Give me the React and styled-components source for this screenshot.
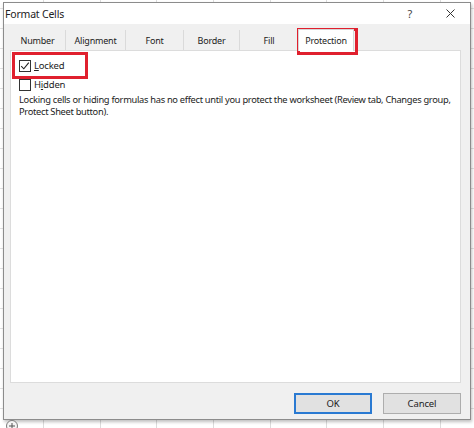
import React from 'react';
import styled, { createGlobalStyle } from 'styled-components';

const GlobalStyle = createGlobalStyle`
  html, body {
    margin: 0;
    padding: 0;
  }
  body {
    font-family: "Noto Sans", "Open Sans", sans-serif;
    color: #1a1a1a;
  }
`;

const tabs = [
  { label: 'Number', width: 55 },
  { label: 'Alignment', width: 60 },
  { label: 'Font', width: 58 },
  { label: 'Border', width: 56 },
  { label: 'Fill', width: 59 },
  { label: 'Protection', width: 56, active: true },
];

const Sheet = styled.div`
  position: relative;
  width: 474px;
  height: 428px;
  overflow: hidden;
  box-sizing: border-box;
  padding: 2px 0 0 3px;
  background-color: #ffffff;
  background-image:
    repeating-linear-gradient(90deg, transparent 0 43px, #dcdcdc 43px 44px, transparent 44px 56.7px),
    repeating-linear-gradient(0deg, transparent 0 19px, #e2e2e2 19px 20px);
`;

const Dialog = styled.div`
  position: relative;
  width: 468px;
  height: 418px;
  box-sizing: border-box;
  border: 1px solid #8c8c8c;
  background: #f0f0f0;
  box-shadow: 1px 2px 3px rgba(0, 0, 0, 0.25);
  display: flex;
  flex-direction: column;
`;

const TitleBar = styled.div`
  height: 21px;
  flex: none;
  background: #ffffff;
  display: flex;
  align-items: center;
  padding: 0 0 0 1px;
`;

const Title = styled.div`
  flex: 1;
  font-size: 10.5px;
  letter-spacing: -0.2px;
  color: #222;
`;

const TitleButton = styled.div`
  width: 40px;
  height: 21px;
  display: flex;
  align-items: center;
  justify-content: center;
  font-size: 11px;
  color: #444;
`;

const Body = styled.div`
  flex: 1;
  display: flex;
  flex-direction: column;
  padding: 4px 9px 0 6px;
`;

const TabStrip = styled.div`
  display: flex;
  align-items: flex-end;
  height: 22px;
  flex: none;
`;

const Tab = styled.div`
  width: ${p => p.$width}px;
  height: ${p => (p.$active ? 22 : 20)}px;
  box-sizing: border-box;
  display: flex;
  align-items: center;
  justify-content: center;
  font-size: 9px;
  letter-spacing: -0.2px;
  color: #222;
  background: ${p => (p.$active ? '#ffffff' : 'transparent')};
  border-left: 1px solid ${p => (p.$active ? '#d6d6d6' : '#dadada')};
  border-right: ${p => (p.$active ? '1px solid #d6d6d6' : 'none')};
  border-top: ${p => (p.$active ? '1px solid #d6d6d6' : 'none')};
  margin-bottom: ${p => (p.$active ? '-1px' : '0')};
  position: relative;
  z-index: ${p => (p.$active ? 1 : 0)};
  &:first-child {
    border-left: none;
  }
`;

const Panel = styled.div`
  height: 333px;
  flex: none;
  box-sizing: border-box;
  background: #ffffff;
  border: 1px solid #dcdcdc;
  padding: 8px 0 0 8px;
`;

const Options = styled.div`
  display: flex;
  flex-direction: column;
  gap: 6px;
`;

const CheckRow = styled.label`
  display: flex;
  align-items: center;
  gap: 3px;
  height: 13px;
  font-size: 9.5px;
  letter-spacing: -0.2px;
  color: #222;
`;

const Box = styled.span`
  width: 12px;
  height: 12px;
  box-sizing: border-box;
  border: 1px solid #333;
  background: #fff;
  display: flex;
  align-items: center;
  justify-content: center;
`;

const Key = styled.span`
  text-decoration: underline;
  text-underline-offset: 1px;
`;

const Note = styled.p`
  margin: 3px 0 0;
  font-size: 9.3px;
  letter-spacing: -0.3px;
  line-height: 12px;
  white-space: nowrap;
  color: #222;
`;

const Footer = styled.div`
  display: flex;
  justify-content: flex-end;
  gap: 11px;
  padding: 10px 0 0;
`;

const Button = styled.div`
  width: 78px;
  height: 21px;
  box-sizing: border-box;
  display: flex;
  align-items: center;
  justify-content: center;
  font-size: 9.5px;
  letter-spacing: -0.1px;
  color: #222;
  background: #e1e1e1;
  border: ${p => (p.$primary ? '2px solid #2a7ad2' : '1px solid #adadad')};
`;

const Callout = styled.div`
  position: absolute;
  box-sizing: border-box;
  border: 3px solid #e0202e;
  pointer-events: none;
`;

const AddSheet = styled.div`
  position: absolute;
  left: 6px;
  top: 420px;
  width: 12px;
  height: 12px;
  box-sizing: border-box;
  border-radius: 50%;
  border: 1px solid #7a7a7a;
  background: #f4f4f4;
  display: flex;
  align-items: center;
  justify-content: center;
`;

function CheckMark() {
  return (
    <svg width="10" height="10" viewBox="0 0 10 10">
      <path d="M1.2 5.2 L3.8 7.8 L8.8 1.6" fill="none" stroke="#222" strokeWidth="1.1" />
    </svg>
  );
}

function CloseIcon() {
  return (
    <svg width="9" height="9" viewBox="0 0 9 9">
      <path d="M0.5 0.5 L8.5 8.5 M8.5 0.5 L0.5 8.5" stroke="#333" strokeWidth="1" />
    </svg>
  );
}

function PlusIcon() {
  return (
    <svg width="8" height="8" viewBox="0 0 8 8">
      <path d="M4 1 V7 M1 4 H7" stroke="#555" strokeWidth="1" />
    </svg>
  );
}

export default function App() {
  return (
    <Sheet>
      <GlobalStyle />
      <Dialog>
        <TitleBar>
          <Title>Format Cells</Title>
          <TitleButton>?</TitleButton>
          <TitleButton><CloseIcon /></TitleButton>
        </TitleBar>
        <Body>
          <TabStrip>
            {tabs.map(t => (
              <Tab key={t.label} $width={t.width} $active={t.active}>{t.label}</Tab>
            ))}
          </TabStrip>
          <Panel>
            <Options>
              <CheckRow>
                <Box><CheckMark /></Box>
                <span><Key>L</Key>ocked</span>
              </CheckRow>
              <CheckRow>
                <Box />
                <span>H<Key>i</Key>dden</span>
              </CheckRow>
            </Options>
            <Note>
              Locking cells or hiding formulas has no effect until you protect the worksheet (Review tab, Changes group,
              <br />
              Protect Sheet button).
            </Note>
          </Panel>
          <Footer>
            <Button $primary>OK</Button>
            <Button>Cancel</Button>
          </Footer>
        </Body>
      </Dialog>
      <Callout style={{ left: 12, top: 52, width: 76, height: 27 }} />
      <Callout style={{ left: 297, top: 28, width: 61, height: 27 }} />
      <AddSheet><PlusIcon /></AddSheet>
    </Sheet>
  );
}
